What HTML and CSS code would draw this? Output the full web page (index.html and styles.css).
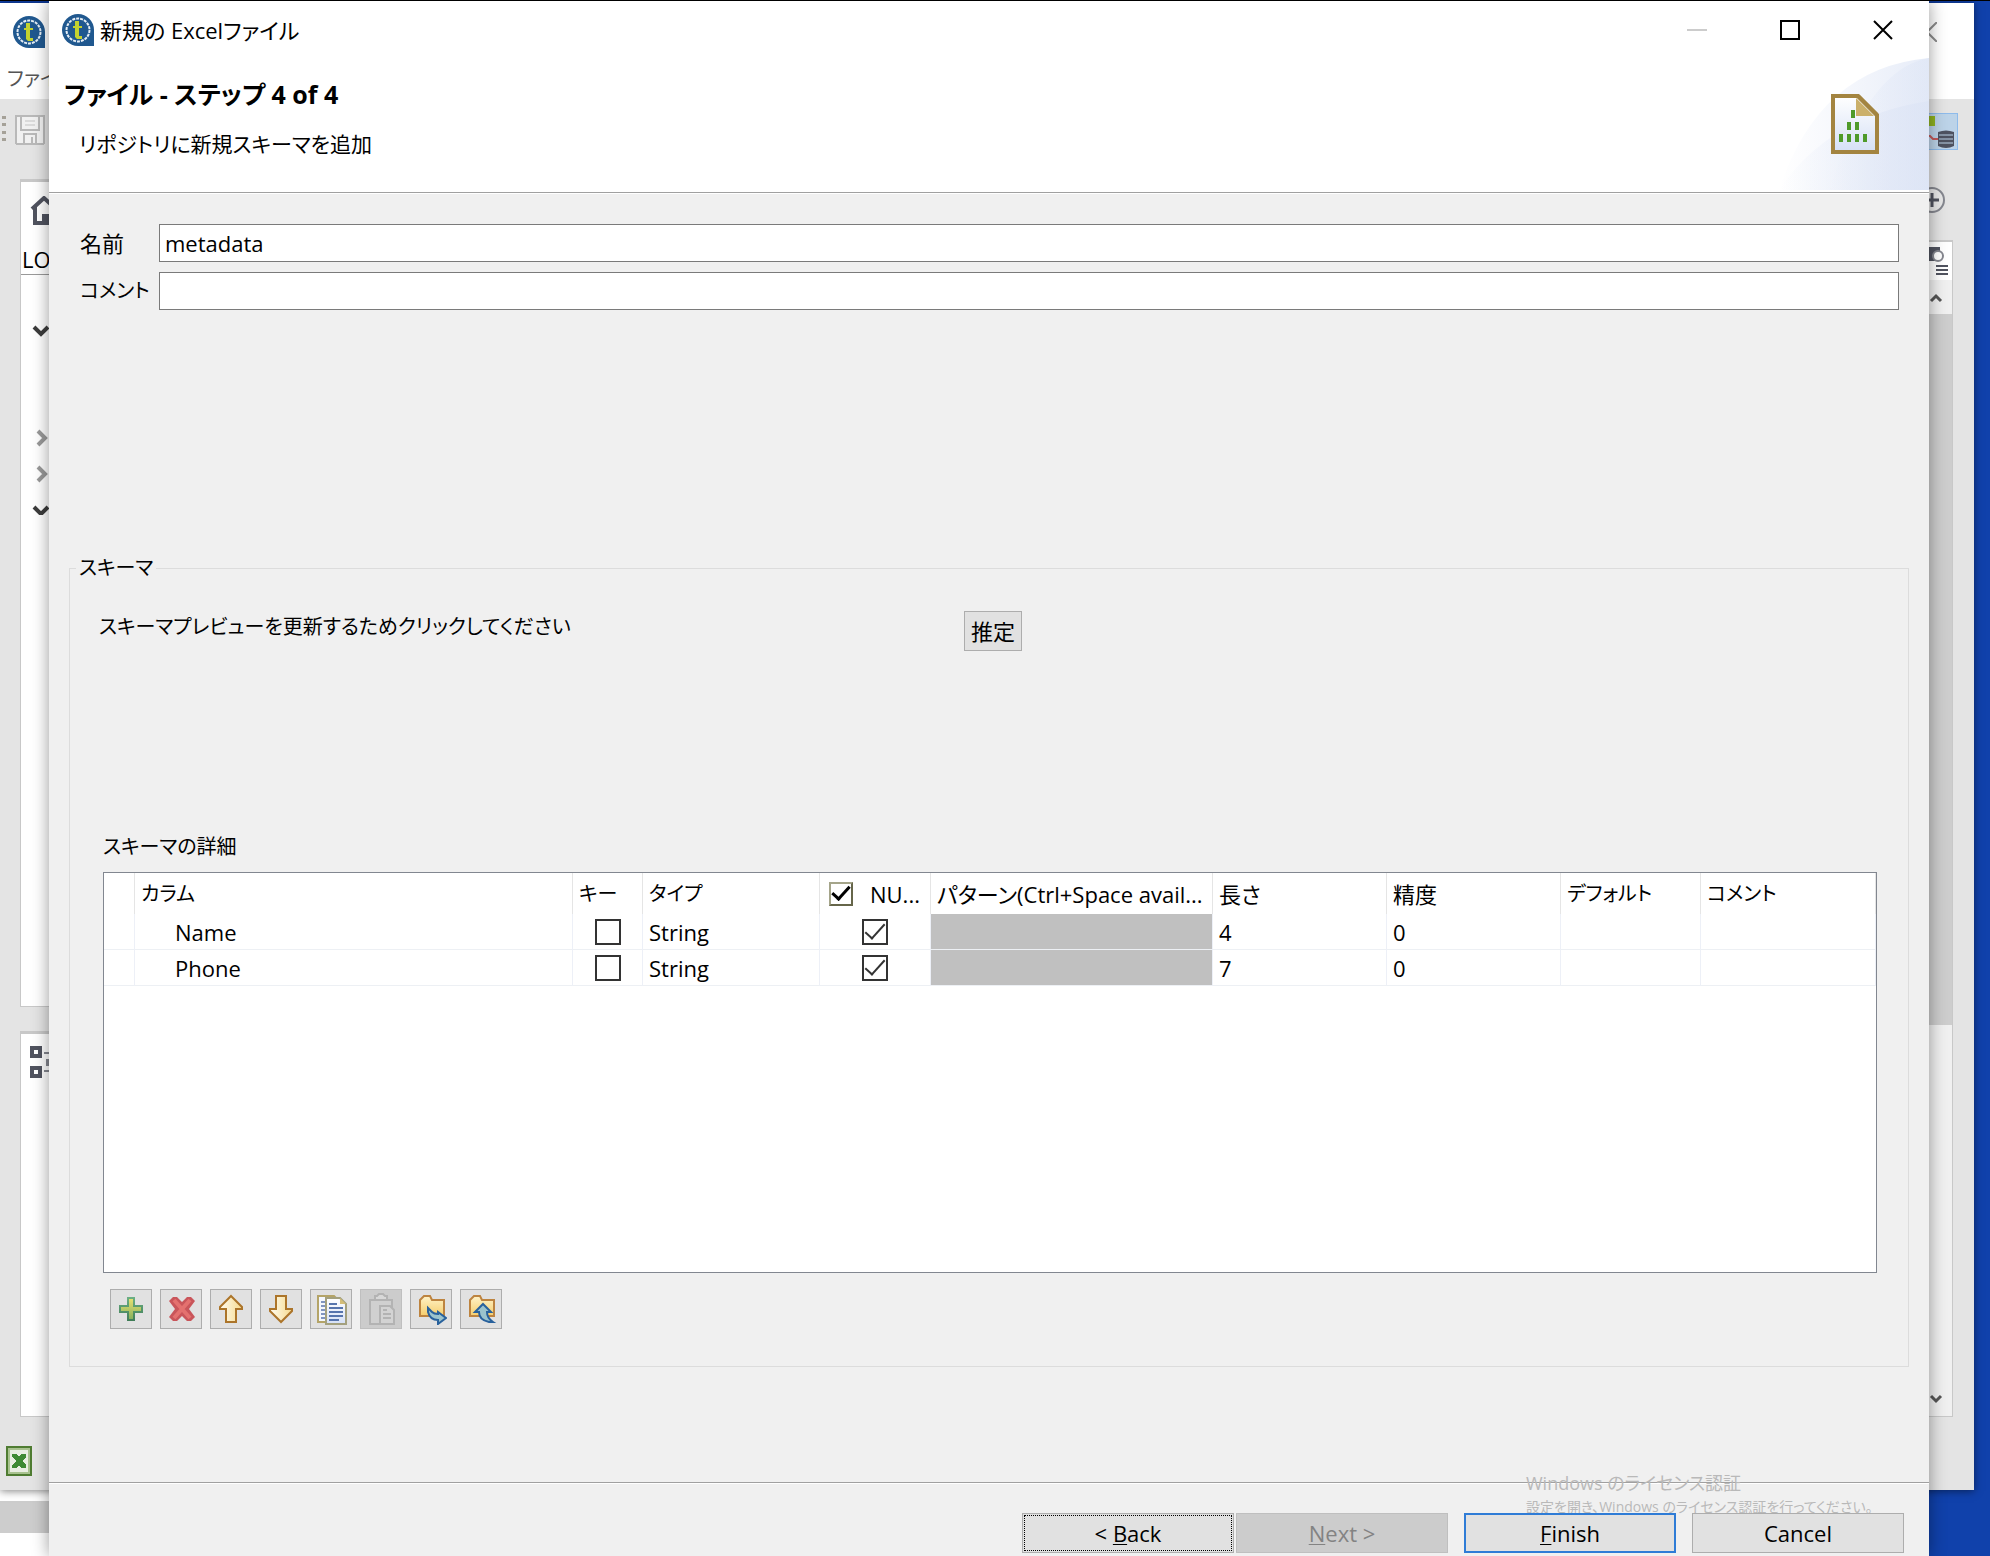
FILE: index.html
```html
<!DOCTYPE html>
<html lang="ja">
<head>
<meta charset="utf-8">
<title>新規の Excelファイル</title>
<link rel="stylesheet" href="styles.css">
</head>
<body>
<svg class="defs" aria-hidden="true">
  <defs>
    <linearGradient id="gold" x1="0" x2="1" y1="0" y2="0"><stop offset="0" stop-color="#fffdf2"/><stop offset="1" stop-color="#f6da8e"/></linearGradient>
    <linearGradient id="folder" x1="0" x2="0" y1="0" y2="1"><stop offset="0" stop-color="#fff3c9"/><stop offset="1" stop-color="#f5cd6c"/></linearGradient>
    <linearGradient id="sheet" x1="0" x2="0" y1="0" y2="1"><stop offset="0" stop-color="#ffffff"/><stop offset="1" stop-color="#d5e0f6"/></linearGradient>
    <linearGradient id="plus" x1="0" x2="0" y1="0" y2="1"><stop offset="0" stop-color="#e6e070"/><stop offset="1" stop-color="#88b05c"/></linearGradient>
    <linearGradient id="plusEdge" x1="0" x2="0" y1="0" y2="1"><stop offset="0" stop-color="#6db084"/><stop offset="1" stop-color="#3f7c56"/></linearGradient>
    <linearGradient id="swoop" x1="0" x2="1" y1="0" y2="0"><stop offset="0" stop-color="#dfe6f6" stop-opacity="0"/><stop offset="1" stop-color="#dce4f5"/></linearGradient>
    <symbol id="logo" viewBox="0 0 32 32">
      <path d="M16 0a16 16 0 0 1 16 16v16H16A16 16 0 0 1 16 0z" fill="#20588f"/>
      <circle cx="16" cy="16" r="11.5" fill="none" stroke="#e6eef5" stroke-width="2" stroke-dasharray="3 1"/>
      <path d="M13 7h4v5h3v2h-3v8h3v3h-5l-2-2v-9h-2v-2h2z" fill="#c4d22f"/>
    </symbol>
  </defs>
</svg>

<div class="taskstrip"></div>

<div class="studio">
  <header class="studio-title">
    <svg class="logo" viewBox="0 0 32 32"><use href="#logo"/></svg>
    <svg class="studio-close" viewBox="0 0 20 20"><path d="M0 0l20 20M20 0L0 20" stroke="#8c8c8c" stroke-width="2"/></svg>
  </header>
  <nav class="studio-menu">ファイ</nav>
  <div class="studio-tools">
    <svg width="46" height="30" viewBox="0 0 46 30" shape-rendering="crispEdges">
      <path d="M2 1h4v3H2zM2 8h4v3H2zM2 16h4v3H2zM2 23h4v3H2z" fill="#a5a198"/>
      <path d="M16 1h28v27l-1 1H17l-1-1z" fill="#f1f1f1" stroke="#b9b9b9" stroke-width="2"/>
      <path d="M21 1v14h18V1M24 29V19h12v10M32 22v6" fill="none" stroke="#b9b9b9" stroke-width="2"/>
      <path d="M25 6h10M25 10h10" stroke="#dadada" stroke-width="2"/>
    </svg>
    <span class="perspective">
      <svg width="40" height="36" viewBox="0 0 40 36">
        <path d="M6 2h12v10H6z" fill="#8fb320"/><path d="M8 22h5l3 3h6" fill="none" stroke="#c45a5a" stroke-width="2"/>
        <path d="M21 18q8-3 16 0v14q-8 4-16 0z" fill="#4e5260"/><path d="M22 21h14M22 25h14M22 29h14" stroke="#bcd3e8"/>
      </svg>
    </span>
  </div>
  <div class="studio-body">
    <div class="views">
      <section class="view repository">
        <div class="view-tab">
          <svg width="34" height="30" viewBox="0 0 34 30"><path d="M3 13L15 2l12 11M6 11v16h18V11" fill="none" stroke="#50535f" stroke-width="4"/><path d="M13 18h8v10h-8z" fill="#50535f"/></svg>
        </div>
        <div class="filter">LO</div>
        <svg class="tree" width="36" height="240" viewBox="0 0 36 240" fill="none" stroke-width="4">
          <path d="M13 52l7 7 7-7M13 232l7 7 7-7" stroke="#3c3c3c"/>
          <path d="M17 156l7 7-7 7M17 192l7 7-7 7" stroke="#999"/>
        </svg>
      </section>
      <section class="view outline">
        <svg width="34" height="46" viewBox="0 0 34 46" shape-rendering="crispEdges"><path d="M9 12h12v12H9zM9 32h12v12H9z" fill="#50535f"/><path d="M13 16h4v4h-4zM13 36h4v4h-4z" fill="#fff"/><path d="M23 18h6v2h-6zM25 25h6v7h-6zM23 36h6v2h-6z" fill="#85878f"/></svg>
      </section>
    </div>
    <div class="palette">
      <svg class="add" width="32" height="32" viewBox="0 0 32 32"><circle cx="16" cy="16" r="12" fill="#e8e8e8" stroke="#85878f" stroke-width="2"/><path d="M16 9v14M9 16h14" stroke="#50535f" stroke-width="3"/></svg>
      <div class="palette-box">
        <svg width="40" height="38" viewBox="0 0 40 38"><path d="M4 5h22v14H4z" fill="#50535f"/><circle cx="24" cy="14" r="5" fill="#fff" stroke="#85878f" stroke-width="2"/><path d="M22 24h12M22 28h12M22 32h12" stroke="#50535f" stroke-width="2"/></svg>
        <div class="scroll">
          <svg width="40" height="34" viewBox="0 0 40 34"><path d="M17 21l5-5 5 5" fill="none" stroke="#555" stroke-width="3"/></svg>
          <div class="thumb"></div>
          <svg width="40" height="34" viewBox="0 0 40 34"><path d="M17 14l5 5 5-5" fill="none" stroke="#555" stroke-width="3"/></svg>
        </div>
      </div>
    </div>
  </div>
  <footer class="studio-status">
    <svg width="26" height="30" viewBox="0 0 26 30" shape-rendering="crispEdges">
      <path d="M1 1h24v28H1z" fill="#e9eee2" stroke="#4f7c32" stroke-width="2"/><path d="M3 3h20v24H3z" fill="none" stroke="#a8c28f" stroke-width="2"/>
      <path d="M6 8h5l2 3 2-3h5v3l-4 4 4 4v3h-5l-2-3-2 3H6v-3l4-4-4-4z" fill="#3f8a34"/>
    </svg>
  </footer>
</div>

<main class="dialog">
  <header class="titlebar">
    <svg class="logo" viewBox="0 0 32 32"><use href="#logo"/></svg>
    <h1>新規の Excelファイル</h1>
    <div class="window-buttons">
      <button type="button" aria-label="最小化" disabled><svg width="20" height="20" viewBox="0 0 20 20"><path d="M0 10h20" stroke="#ccc" stroke-width="2"/></svg></button>
      <button type="button" aria-label="最大化"><svg width="20" height="20" viewBox="0 0 20 20"><path d="M1 1h18v18H1z" fill="none" stroke="#000" stroke-width="2"/></svg></button>
      <button type="button" aria-label="閉じる"><svg width="20" height="20" viewBox="0 0 20 20"><path d="M1 1l18 18M19 1L1 19" stroke="#000" stroke-width="2"/></svg></button>
    </div>
  </header>

  <div class="banner">
    <div class="banner-text">
      <h2>ファイル - ステップ 4 of 4</h2>
      <p>リポジトリに新規スキーマを追加</p>
    </div>
    <svg class="banner-art" width="150" height="132" viewBox="0 0 150 132">
      <path d="M0 132Q40 10 150 0V132z" fill="url(#swoop)" opacity=".7"/>
      <path d="M50 132Q90 10 150 0V132z" fill="url(#swoop)" opacity=".5"/>
      <path d="M0 132Q50 58 150 43V132z" fill="url(#swoop)" opacity=".7"/>
      <path d="M54 38h25l19 19v37H54z" fill="url(#sheet)" stroke="#a38440" stroke-width="4"/>
      <path d="M77 40l18 18H77z" fill="#cbb06a"/>
      <path d="M79 38l19 19" stroke="#a38440" stroke-width="4"/>
      <path d="M72 52h4v8h-4zM68 64h4v8h-4zM76 64h4v8h-4zM60 76h4v8h-4zM68 76h4v8h-4zM76 76h4v8h-4zM84 76h4v8h-4z" fill="#4e9a2a"/>
    </svg>
  </div>

  <form class="page">
    <div class="fields">
      <label for="name">名前</label>
      <input id="name" type="text" value="metadata">
      <label for="comment" class="kana">コメント</label>
      <input id="comment" type="text">
    </div>

    <fieldset class="schema">
      <legend class="kana">スキーマ</legend>
      <div class="guess">
        <span class="kana">スキーマプレビューを更新するためクリックしてください</span>
        <button type="button" class="btn">推定</button>
      </div>
      <div class="detail-title kana">スキーマの詳細</div>
      <div class="grid">
        <table>
          <colgroup><col class="c-mark"><col class="c-name"><col class="c-key"><col class="c-type"><col class="c-null"><col class="c-pattern"><col class="c-num"><col class="c-num"><col class="c-default"><col></colgroup>
          <thead>
            <tr><th></th><th class="kana">カラム</th><th class="kana">キー</th><th class="kana">タイプ</th><th><label class="null-head"><input type="checkbox" class="all" checked><span>NU...</span></label></th><th>パターン(Ctrl+Space avail...</th><th>長さ</th><th>精度</th><th class="kana">デフォルト</th><th class="kana">コメント</th></tr>
          </thead>
          <tbody>
            <tr><td></td><td class="name">Name</td><td class="tick"><input type="checkbox" aria-label="Name キー"></td><td>String</td><td class="tick"><input type="checkbox" aria-label="Name NULL" checked></td><td class="off"></td><td>4</td><td>0</td><td></td><td></td></tr>
            <tr><td></td><td class="name">Phone</td><td class="tick"><input type="checkbox" aria-label="Phone キー"></td><td>String</td><td class="tick"><input type="checkbox" aria-label="Phone NULL" checked></td><td class="off"></td><td>7</td><td>0</td><td></td><td></td></tr>
          </tbody>
        </table>
      </div>
      <div class="toolbar">
        <button type="button" class="btn" aria-label="追加"><svg viewBox="0 0 16 16" shape-rendering="crispEdges"><path d="M6 2h4v4h4v4h-4v4H6v-4H2V6h4z" fill="url(#plusEdge)"/><path d="M7 3h2v4h4v2H9v4H7V9H3V7h4z" fill="url(#plus)"/></svg></button>
        <button type="button" class="btn" aria-label="削除"><svg viewBox="0 0 16 16"><path d="M4 2h2l2.500 2.500L11 2h2l2 2-3 4 3 4-2 2h-2l-2.500-2.500L6 14H4l-2-2 3-4-3-4z" fill="#c9555a"/><path d="M4.500 3.500l8 9M12.500 3.500l-8 9" stroke="#e4716f" stroke-width="2"/></svg></button>
        <button type="button" class="btn" aria-label="上へ"><svg viewBox="0 0 16 16"><path d="M8 1.500l5.500 5.500v1h-3v6.500h-5V8h-3V7z" fill="url(#gold)" stroke="#ac752a"/></svg></button>
        <button type="button" class="btn" aria-label="下へ"><svg viewBox="0 0 16 16"><path d="M8 14.500L2.500 9V8h3V1.500h5V8h3v1z" fill="url(#gold)" stroke="#ac752a"/></svg></button>
        <button type="button" class="btn" aria-label="コピー"><svg viewBox="0 0 16 16"><path d="M1.500 1.500h8l3 3v10h-11z" fill="#f4f7fd" stroke="#b4a468"/><path d="M3 4.500h2M3 6.500h2M3 8.500h2M3 10.500h2M3 12.500h2" stroke="#8095c0"/><path d="M5.500 2.500h7l3 3v10h-10z" fill="url(#sheet)" stroke="#a3a07e"/><path d="M12.500 2.500v3h3z" fill="#d4bd78"/><path d="M7 5.500h4M7 7.500h7M7 9.500h7M7 11.500h7M7 13.500h5" stroke="#5674ad"/></svg></button>
        <button type="button" class="btn" aria-label="貼り付け" disabled><svg viewBox="0 0 16 16"><path d="M2.500 3.500h11v12h-11z" fill="#d0d0d0" stroke="#b3b3b3"/><path d="M5 1.500h1l1-1h2l1 1h1v2H5z" fill="#d8d8d8" stroke="#b3b3b3"/><path d="M7.500 6.500h5l2 2v7h-7z" fill="#d3d3d3" stroke="#b3b3b3"/><path d="M9 8.500h2M9 10.500h4M9 12.500h4" stroke="#b3b3b3"/></svg></button>
        <button type="button" class="btn" aria-label="インポート"><svg viewBox="0 0 16 16"><path d="M2.500 3.500l2-2h3l1 2h6v8h-12z" fill="url(#folder)" stroke="#bd8440"/><path d="M6.500 7.500v2q1 4 5 4v2l4-3-4-3v1q-2 0-3-1z" fill="#9bc3cc" stroke="#28619c"/></svg></button>
        <button type="button" class="btn" aria-label="エクスポート"><svg viewBox="0 0 16 16"><path d="M2.500 3.500l2-2h3l1 2h6v8h-12z" fill="url(#folder)" stroke="#bd8440"/><path d="M9 5.500l4 4h-2q0 3 3 5h-2q-5-1-5-5H5z" fill="#9bc3cc" stroke="#28619c"/></svg></button>
      </div>
    </fieldset>
  </form>

  <footer class="actions">
    <div class="watermark">
      <p class="mark-title">Windows のライセンス認証</p>
      <p class="mark-text">設定を開き、Windows のライセンス認証を行ってください。</p>
    </div>
    <button type="button" class="btn focused"><span>&lt; <u>B</u>ack</span></button>
    <button type="button" class="btn next" disabled><span><u>N</u>ext &gt;</span></button>
    <button type="button" class="btn primary"><span><u>F</u>inish</span></button>
    <button type="button" class="btn">Cancel</button>
  </footer>
</main>
</body>
</html>
```

FILE: styles.css
```css
* { box-sizing: border-box; }

body {
  margin: 0;
  position: relative;
  height: 100vh;
  min-height: 1200px;
  overflow: hidden;
  background: #1041ab;
  border-top: 1px solid #000;
  color: #000;
  font: 22px/32px "Open Sans", "Noto Sans CJK JP", sans-serif;
  font-feature-settings: "palt";
}

h1, h2, p { margin: 0; font-weight: 400; font-size: 22px; }
svg { display: block; flex: none; }
.defs { position: absolute; width: 0; height: 0; }
.logo { width: 32px; height: 32px; }
.kana { font-size: 20px; white-space: nowrap; }

button, input { font: inherit; font-feature-settings: inherit; color: inherit; }

/* windows behind the dialog */
.taskstrip {
  position: absolute;
  left: 0;
  bottom: 0;
  width: 60px;
  height: 66px;
  background: linear-gradient(#fff 11px, #cdcdcd 11px, #cdcdcd 43px, #fff 43px);
}

.studio {
  position: absolute;
  inset: 2px 16px 66px 0;
  display: flex;
  flex-direction: column;
  background: #e4e4e4;
  box-shadow: 0 1px 8px rgba(0, 0, 0, .5);
}

.studio-title {
  display: flex;
  justify-content: space-between;
  height: 60px;
  padding: 13px 37px 0 13px;
  background: #fff;
}
.studio-close { width: 20px; height: 20px; margin-top: 6px; }

.studio-menu { height: 36px; padding-left: 7px; font-size: 20px; background: #fff; color: #555; }

.studio-tools { display: flex; justify-content: space-between; padding: 14px 16px 0 0; height: 80px; }
.studio-tools > svg { margin-top: 2px; }
.perspective { height: 37px; background: #bcd3e8; border: 1px solid #8ebbeb; }

.studio-body { flex: 1; display: flex; justify-content: space-between; }

.views { display: flex; flex-direction: column; gap: 24px; width: 80px; padding-left: 20px; }
.view { background: #fff; border: solid #c8c8c8; border-width: 3px 0 1px 1px; }
.repository { flex: 829; }
.outline { flex: 384; }
.view-tab { height: 64px; padding: 14px 0 0 8px; }
.filter { height: 29px; line-height: 26px; border-bottom: 1px solid #999; padding-left: 1px; }

.palette { display: flex; flex-direction: column; width: 60px; padding-right: 21px; }
.add { margin-top: 5px; align-self: flex-end; margin-right: 5px; }
.palette-box {
  flex: 1;
  display: flex;
  flex-direction: column;
  margin-top: 24px;
  background: #fff;
  border: solid #c8c8c8;
  border-width: 2px 1px 1px 0;
}
.scroll { flex: 1; display: flex; flex-direction: column; justify-content: space-between; background: #f0f0f0; }
.thumb { height: 711px; margin-bottom: auto; background: #cdcdcd; }

.studio-status { padding: 29px 0 14px 6px; }

/* wizard dialog */
.dialog {
  position: absolute;
  inset: 0 61px 0 49px;
  display: flex;
  flex-direction: column;
  background: #f0f0f0;
  box-shadow: 0 0 16px rgba(0, 0, 0, .4);
}

.titlebar { display: flex; align-items: center; gap: 6px; height: 57px; padding-left: 13px; background: #fff; }
.window-buttons { display: flex; margin-left: auto; }
.window-buttons button {
  display: grid;
  place-items: center;
  width: 93px;
  height: 56px;
  padding: 0;
  border: 0;
  background: none;
}

.banner {
  display: flex;
  justify-content: space-between;
  height: 135px;
  background: #fff;
  border-bottom: 1px solid #a0a0a0;
}
.banner-text { padding: 20px 0 0 15px; }
.banner h2 { font-size: 25px; font-weight: 700; }
.banner p { padding: 18px 0 0 15px; font-size: 21px; }

.page { flex: 1; display: flex; flex-direction: column; padding: 30px 20px 115px 20px; border-top: 1px solid #fff; }

.fields {
  display: grid;
  grid-template-columns: 69px 1fr;
  gap: 10px;
  align-items: center;
  padding: 0 10px 0 11px;
}
.fields input {
  width: 100%;
  height: 38px;
  padding: 0 5px;
  border: 1px solid #7a7a7a;
  border-radius: 0;
  background: #fff;
}

.schema {
  flex: 1;
  display: flex;
  flex-direction: column;
  min-width: 0;
  margin: 242px 0 0;
  padding: 27px 31px 37px 33px;
  border: 1px solid #dcdcdc;
}
.schema legend { margin-left: -27px; padding: 0 3px; }

.btn {
  padding: 0;
  height: 40px;
  background: #e1e1e1;
  border: 1px solid #adadad;
  border-radius: 0;
}
.btn:disabled { background: #ccc; border-color: #bfbfbf; color: #838383; }

.guess { display: grid; grid-template-columns: 865px 58px; align-items: start; margin-left: -4px; }

.detail-title { margin-top: 180px; }

.grid { flex: 1; margin-top: 9px; border: 1px solid #828790; background: #fff; }
table { width: 100%; table-layout: fixed; border-collapse: separate; border-spacing: 0; }
th, td { padding: 0 0 0 6px; text-align: left; font-weight: 400; white-space: nowrap; overflow: hidden; }
th { height: 41px; border-right: 1px solid #e5e5e5; }
td { height: 36px; border-right: 1px solid #edf0f7; border-bottom: 1px solid #edf0f4; }
td.name { padding-left: 40px; }
td.tick { padding: 0; }
td.off { background: #c0c0c0; }

.c-mark { width: 31px; }
.c-name { width: 438px; }
.c-key { width: 70px; }
.c-type { width: 177px; }
.c-null { width: 111px; }
.c-pattern { width: 282px; }
.c-num { width: 174px; }
.c-default { width: 140px; }

input[type="checkbox"] {
  appearance: none;
  display: grid;
  place-items: center;
  width: 26px;
  height: 26px;
  margin: 0 auto;
  border: 2px solid #333;
  background: #fff;
}
input[type="checkbox"]:checked::before {
  content: "";
  width: 18px;
  height: 8px;
  margin-top: -6px;
  border: solid #333;
  border-width: 0 0 2px 2px;
  transform: rotate(-48deg);
}
input[type="checkbox"].all { width: 24px; height: 24px; margin: 0; border-color: #a5a58a #66664a #66664a #a5a58a; }
input[type="checkbox"].all:checked::before { width: 15px; height: 7px; border-color: #000; border-width: 0 0 3px 3px; }
.null-head { display: flex; align-items: center; gap: 17px; padding-left: 3px; }

.toolbar { display: flex; gap: 8px; margin: 16px 0 0 7px; }
.toolbar .btn { display: grid; place-items: center; width: 42px; }
.toolbar svg { width: 32px; height: 32px; }

.actions {
  position: relative;
  display: flex;
  justify-content: flex-end;
  height: 74px;
  padding: 30px 25px 0 0;
  border-top: 1px solid #a0a0a0;
  box-shadow: inset 0 1px #fff;
}
.actions .btn { position: relative; width: 212px; margin-left: 16px; }
.actions .next { margin-left: 2px; }
.actions .primary { border: 2px solid #2f7cd6; }
.actions .focused { padding: 1px; }
.focused span { display: grid; place-content: center; grid-auto-flow: column; white-space: pre; height: 100%; border: 1px dotted #000; }
u { text-underline-offset: 2px; text-decoration-thickness: 1px; }

.watermark { position: absolute; right: 69px; top: -14px; width: 334px; color: #b9b9b9; white-space: nowrap; }
.mark-title { font-size: 18px; line-height: 28px; }
.mark-text { font-size: 14px; line-height: 20px; }
```
